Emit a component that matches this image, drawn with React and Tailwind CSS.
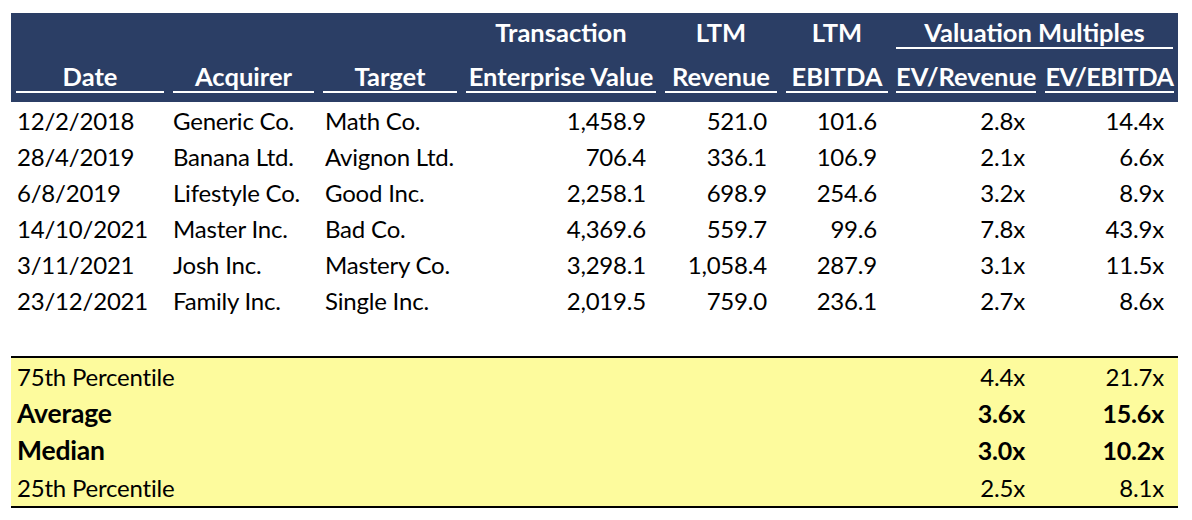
import React from "react";

const rows = [
  ["12/2/2018", "Generic Co.", "Math Co.", "1,458.9", "521.0", "101.6", "2.8x", "14.4x"],
  ["28/4/2019", "Banana Ltd.", "Avignon Ltd.", "706.4", "336.1", "106.9", "2.1x", "6.6x"],
  ["6/8/2019", "Lifestyle Co.", "Good Inc.", "2,258.1", "698.9", "254.6", "3.2x", "8.9x"],
  ["14/10/2021", "Master Inc.", "Bad Co.", "4,369.6", "559.7", "99.6", "7.8x", "43.9x"],
  ["3/11/2021", "Josh Inc.", "Mastery Co.", "3,298.1", "1,058.4", "287.9", "3.1x", "11.5x"],
  ["23/12/2021", "Family Inc.", "Single Inc.", "2,019.5", "759.0", "236.1", "2.7x", "8.6x"],
];

const stats = [
  ["75th Percentile", "4.4x", "21.7x", false],
  ["Average", "3.6x", "15.6x", true],
  ["Median", "3.0x", "10.2x", true],
  ["25th Percentile", "2.5x", "8.1x", false],
];

const grid = "grid grid-cols-[157px_150px_143px_199px_121px_111px_148px_138px]";

function HCell({ children, underline = true, className = "" }) {
  return (
    <div className={`h-full flex flex-col justify-end pb-[9px] pl-[5px] pr-[4px] ${className}`}>
      <div
        className={`text-center leading-[28px] pb-[1px] whitespace-nowrap ${
          underline ? "border-b-2 border-white" : "border-b-2 border-transparent"
        }`}
      >
        {children}
      </div>
    </div>
  );
}

export default function App() {
  return (
    <div className="w-[1192px] h-[520px] bg-white pt-[13px] pl-[11px] font-['Lato',sans-serif] text-black">
      <div className="w-[1167px]">
        {/* Header */}
        <div className="bg-[#2b3e65] text-white font-bold text-[25.5px] tracking-[0px]">
          <div className={`${grid} h-[44px]`}>
            <HCell underline={false}>{""}</HCell>
            <HCell underline={false}>{""}</HCell>
            <HCell underline={false}>{""}</HCell>
            <HCell underline={false} className="!pb-[8px]">Transaction</HCell>
            <HCell underline={false} className="!pb-[8px]">LTM</HCell>
            <HCell underline={false} className="!pb-[8px]">LTM</HCell>
            <div className="col-span-2 h-full flex flex-col justify-end pb-[8px] pl-[4px] pr-[5px]">
              <div className="text-center leading-[28px] pb-[1px] border-b-2 border-white whitespace-nowrap">
                Valuation Multiples
              </div>
            </div>
          </div>
          <div className={`${grid} h-[45px]`}>
            <HCell>Date</HCell>
            <HCell>Acquirer</HCell>
            <HCell>Target</HCell>
            <HCell>Enterprise Value</HCell>
            <HCell>Revenue</HCell>
            <HCell>EBITDA</HCell>
            <HCell className="!pl-[4px]">EV/Revenue</HCell>
            <HCell className="tracking-[-0.6px]">EV/EBITDA</HCell>
          </div>
        </div>

        {/* Data rows */}
        <div className="text-[24px] tracking-[-0.2px] pt-[1px]">
          {rows.map((r, i) => (
            <div key={i} className={`${grid} h-[36px] leading-[36px] whitespace-nowrap`}>
              <div className="pl-[6px]">{r[0]}</div>
              <div className="pl-[5px]">{r[1]}</div>
              <div className="pl-[7px]">{r[2]}</div>
              <div className="text-right pr-[14px]">{r[3]}</div>
              <div className="text-right pr-[14px]">{r[4]}</div>
              <div className="text-right pr-[15px]">{r[5]}</div>
              <div className="text-right pr-[15px]">{r[6]}</div>
              <div className="text-right pr-[14px]">{r[7]}</div>
            </div>
          ))}
        </div>

        {/* Summary */}
        <div className="mt-[37px] bg-[#fdfb9d] border-y-2 border-black text-[24px] tracking-[-0.2px]">
          {stats.map(([label, a, b, bold], i) => (
            <div
              key={i}
              className={`${grid} h-[37px] leading-[37px] whitespace-nowrap ${
                bold ? "font-bold" : ""
              }`}
            >
              <div className={`col-span-6 pl-[6px] ${bold ? "text-[26.5px]" : ""}`}>{label}</div>
              <div className={`text-right pr-[15px] ${bold ? "text-[25px]" : ""}`}>{a}</div>
              <div className={`text-right pr-[14px] ${bold ? "text-[25px]" : ""}`}>{b}</div>
            </div>
          ))}
        </div>
      </div>
    </div>
  );
}
